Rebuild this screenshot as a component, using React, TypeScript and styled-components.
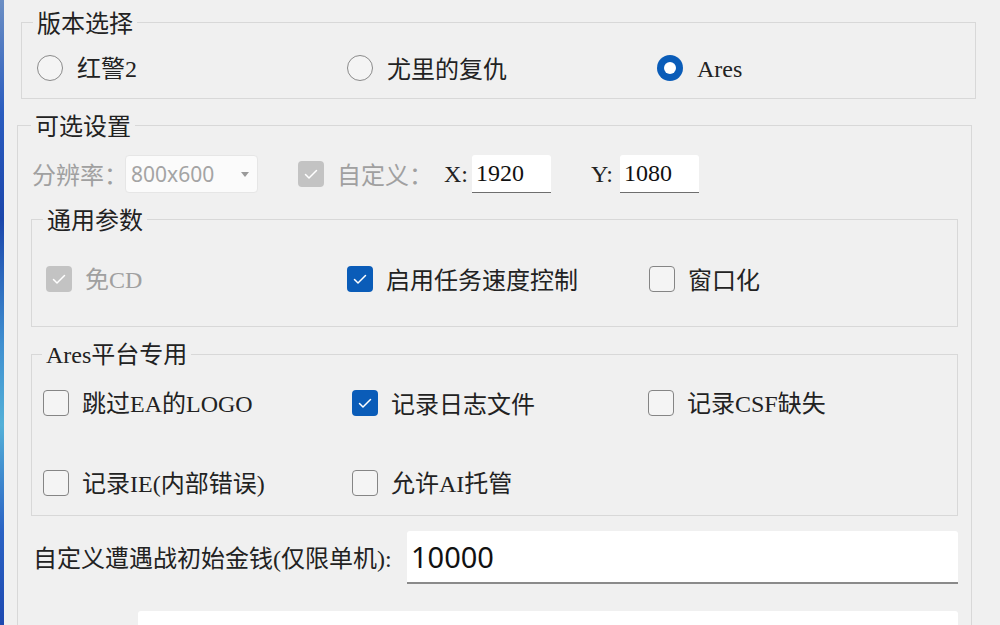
import React from 'react'
import styled, { createGlobalStyle } from 'styled-components'

const GlobalStyle = createGlobalStyle`
  html, body {
    margin: 0;
    padding: 0;
    background: #f0f0f0;
  }
  body {
    width: 1000px;
    height: 625px;
    overflow: hidden;
    font-family: "Noto Sans CJK SC", sans-serif;
    color: #222;
  }
`

const Window = styled.div`
  display: flex;
  height: 625px;
  overflow: hidden;
  background: #f0f0f0;
`

// sliver of desktop wallpaper on the left edge
const Wallpaper = styled.div`
  flex: none;
  width: 4px;
  background: linear-gradient(
    to bottom,
    #6c8fc4 0%,
    #2a5cbf 18%,
    #1b46ab 35%,
    #3f8fd0 55%,
    #53b0d8 68%,
    #2a62c4 85%,
    #1d49b0 100%
  );
`

const Content = styled.div`
  flex: 1;
  display: flex;
  flex-direction: column;
`

const Group = styled.fieldset<{ $top: number; $left?: number }>`
  box-sizing: border-box;
  margin: ${(p) => p.$top}px 0 0 ${(p) => p.$left ?? 0}px;
  padding: 0;
  min-width: 0;
  border: 1px solid #d8d8d8;
  ${(p) => (p.$left !== undefined ? 'width: 955px;' : '')}
`

const Legend = styled.legend<{ $indent: number }>`
  margin-left: ${(p) => p.$indent}px;
  padding: 0 4px;
  font-size: 24px;
  line-height: 28px;
  color: #222;
  white-space: nowrap;
`

// latin runs: tall serif, like the dialog's SimSun latin
const Latin = styled.span`
  font-family: "Liberation Serif", serif;
  font-size: 24px;
`

const Mixed = ({ text }: { text: string }) => (
  <>
    {text
      .split(/([\x20-\x7e]+)/)
      .map((part, i) =>
        /^[\x20-\x7e]+$/.test(part) ? <Latin key={i}>{part}</Latin> : part
      )}
  </>
)

const Label = styled.span<{ $dim?: boolean; $gap?: number }>`
  margin-left: ${(p) => p.$gap ?? 13}px;
  font-size: 24px;
  line-height: 28px;
  white-space: nowrap;
  color: ${(p) => (p.$dim ? '#a0a0a0' : '#222')};
`

const VersionGrid = styled.div`
  display: grid;
  grid-template-columns: 310px 310px 1fr;
  grid-auto-rows: 32px;
  padding: 16px 0 14px 15px;
`

const OptionsBody = styled.div`
  display: flex;
  flex-direction: column;
  padding: 16px 13px 0 13px;
`

const CommonGrid = styled.div`
  display: grid;
  grid-template-columns: 301px 302px 1fr;
  grid-auto-rows: 32px;
  padding: 30px 0 31px 14px;
`

const AresGrid = styled.div`
  display: grid;
  grid-template-columns: 309px 296px 1fr;
  grid-auto-rows: 32px;
  row-gap: 48px;
  padding: 18px 0 16px 11px;
`

const Item = styled.label`
  display: flex;
  align-items: center;
`

const RadioDot = styled.span<{ $on?: boolean }>`
  box-sizing: border-box;
  flex: none;
  width: 26px;
  height: 26px;
  border-radius: 50%;
  display: flex;
  align-items: center;
  justify-content: center;
  background: ${(p) => (p.$on ? '#0a5cb8' : '#f4f4f4')};
  border: ${(p) => (p.$on ? 'none' : '1.5px solid #8a8a8a')};
  &::after {
    content: '';
    display: ${(p) => (p.$on ? 'block' : 'none')};
    width: 12px;
    height: 12px;
    border-radius: 50%;
    background: #fff;
  }
`

const Box = styled.span<{ $on?: boolean; $off?: boolean }>`
  box-sizing: border-box;
  flex: none;
  width: 26px;
  height: 26px;
  border-radius: 4px;
  display: flex;
  align-items: center;
  justify-content: center;
  background: ${(p) => (p.$off ? '#c3c3c3' : p.$on ? '#0a5cb8' : '#f4f4f4')};
  border: ${(p) => (p.$on || p.$off ? 'none' : '1.5px solid #858585')};
`

const Tick = () => (
  <svg width="26" height="26" viewBox="0 0 26 26">
    <path
      d="M7.5 13.5 L11 17 L18.5 9.5"
      fill="none"
      stroke="#fff"
      strokeWidth="1.5"
      strokeLinecap="round"
      strokeLinejoin="round"
    />
  </svg>
)

const Radio = ({ text, on }: { text: string; on?: boolean }) => (
  <Item>
    <RadioDot $on={on} />
    <Label $gap={14}>
      <Mixed text={text} />
    </Label>
  </Item>
)

const Check = ({
  text,
  on,
  off,
}: {
  text: string
  on?: boolean
  off?: boolean
}) => (
  <Item>
    <Box $on={on} $off={off}>
      {(on || off) && <Tick />}
    </Box>
    <Label $dim={off}>
      <Mixed text={text} />
    </Label>
  </Item>
)

const ResolutionRow = styled.div`
  display: flex;
  align-items: center;
  height: 38px;
`

const FixedLabel = styled(Label)<{ $w: number }>`
  flex: none;
  width: ${(p) => p.$w}px;
`

const Combo = styled.div`
  box-sizing: border-box;
  flex: none;
  width: 133px;
  height: 38px;
  display: flex;
  align-items: center;
  justify-content: space-between;
  padding: 0 8px 0 5px;
  background: #fbfbfb;
  border: 1px solid #e6e6e6;
  border-radius: 4px;
  font-family: "Noto Sans", sans-serif;
  font-size: 21px;
  color: #a4a4a4;
  &::after {
    content: '';
    border-left: 4.5px solid transparent;
    border-right: 4.5px solid transparent;
    border-top: 5px solid #9a9a9a;
  }
`

const Axis = styled.span<{ $w: number; $gap?: number }>`
  flex: none;
  width: ${(p) => p.$w}px;
  margin-left: ${(p) => p.$gap ?? 0}px;
  font-family: "Liberation Serif", serif;
  font-size: 24px;
  color: #222;
`

const SizeInput = styled.input`
  box-sizing: border-box;
  flex: none;
  width: 79px;
  height: 38px;
  margin: 0;
  padding: 0 0 0 4px;
  border: none;
  border-bottom: 1px solid #6e6e6e;
  border-radius: 3px 3px 0 0;
  background: #fff;
  outline: none;
  font-family: "Liberation Serif", serif;
  font-size: 24px;
  color: #111;
`

const FieldRow = styled.div<{ $top: number }>`
  display: flex;
  align-items: center;
  margin-top: ${(p) => p.$top}px;
  height: 53px;
`

const FieldLabel = styled(Label)<{ $w: number }>`
  flex: none;
  box-sizing: border-box;
  width: ${(p) => p.$w}px;
  margin-left: 0;
  padding-left: 2px;
`

const WideInput = styled.input`
  box-sizing: border-box;
  flex: 1;
  min-width: 0;
  height: 53px;
  margin: 0;
  padding: 0 0 0 4px;
  border: none;
  border-bottom: 2px solid #8a8a8a;
  border-radius: 3px 3px 0 0;
  background: #fff;
  outline: none;
  font-family: "Noto Sans", sans-serif;
  font-size: 29px;
  color: #111;
`

export default function App() {
  return (
    <Window>
      <GlobalStyle />
      <Wallpaper />
      <Content>
        <Group $top={8} $left={17}>
          <Legend $indent={11}>版本选择</Legend>
          <VersionGrid>
            <Radio text="红警2" />
            <Radio text="尤里的复仇" />
            <Radio text="Ares" on />
          </VersionGrid>
        </Group>

        <Group $top={12} $left={13}>
          <Legend $indent={13}>可选设置</Legend>
          <OptionsBody>
            <ResolutionRow>
              <FixedLabel $dim $gap={1} $w={93}>
                分辨率：
              </FixedLabel>
              <Combo>800x600</Combo>
              <Box $off style={{ marginLeft: 40 }}>
                <Tick />
              </Box>
              <FixedLabel $dim $w={107}>
                自定义：
              </FixedLabel>
              <Axis $w={28}>X:</Axis>
              <SizeInput defaultValue="1920" />
              <Axis $w={29} $gap={40}>
                Y:
              </Axis>
              <SizeInput defaultValue="1080" />
            </ResolutionRow>

            <Group $top={12}>
              <Legend $indent={11}>通用参数</Legend>
              <CommonGrid>
                <Check text="免CD" off />
                <Check text="启用任务速度控制" on />
                <Check text="窗口化" />
              </CommonGrid>
            </Group>

            <Group $top={12}>
              <Legend $indent={10}>
                <Mixed text="Ares平台专用" />
              </Legend>
              <AresGrid>
                <Check text="跳过EA的LOGO" />
                <Check text="记录日志文件" on />
                <Check text="记录CSF缺失" />
                <Check text="记录IE(内部错误)" />
                <Check text="允许AI托管" />
              </AresGrid>
            </Group>

            <FieldRow $top={15}>
              <FieldLabel $w={376}>
                <Mixed text="自定义遭遇战初始金钱(仅限单机):" />
              </FieldLabel>
              <WideInput defaultValue="10000" />
            </FieldRow>

            <FieldRow $top={27}>
              <FieldLabel $w={107} />
              <WideInput defaultValue="" />
            </FieldRow>
          </OptionsBody>
        </Group>
      </Content>
    </Window>
  )
}
